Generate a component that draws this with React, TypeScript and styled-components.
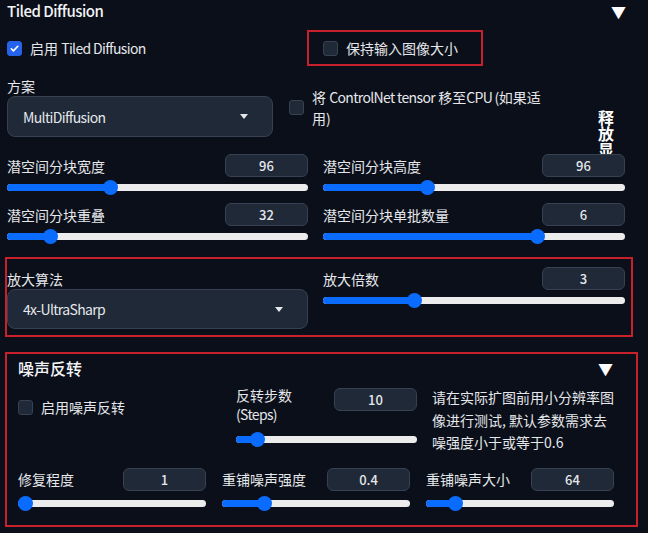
import React from "react";
import styled, { createGlobalStyle } from "styled-components";

const GlobalStyle = createGlobalStyle`
  body {
    margin: 0;
    background: #0b0f19;
    font-family: "Noto Sans CJK SC", "Noto Sans", sans-serif;
    color: #e5e7eb;
  }
`;

const Page = styled.div`
  width: 648px;
  height: 533px;
  overflow: hidden;
  background: #0b0f19;
  padding-left: 7px;
  box-sizing: border-box;
`;

const Header = styled.div<{ $w: number }>`
  height: 22px;
  width: ${(p) => p.$w}px;
  display: flex;
  align-items: center;
  justify-content: space-between;
  margin-bottom: 8px;
`;

const Title = styled.div`
  font-size: 15px;
  font-weight: 500;
  color: #f3f4f6;
  line-height: 22px;
  letter-spacing: -0.5px;
`;

const SubTitle = styled.div`
  font-size: 16px;
  font-weight: 500;
  color: #f3f4f6;
  line-height: 22px;
`;

const Caret = styled.span`
  font-size: 15px;
  color: #ffffff;
  line-height: 1;
`;

// latin runs in the reference are narrower than our font
const Lat = styled.span`
  letter-spacing: -0.65px;
`;

const TopRow = styled.div`
  display: grid;
  grid-template-columns: 300px 302px;
  column-gap: 16px;
  height: 36px;
`;

const CheckRow = styled.label`
  display: flex;
  align-items: center;
  gap: 8px;
  font-size: 14px;
  color: #e5e7eb;
  height: 36px;
`;

const RedFrame = styled.div`
  border: 2px solid #c9212b;
  box-sizing: border-box;
`;

const KeepFrame = styled(RedFrame)`
  margin-left: -16px;
  width: 176px;
  height: 36px;
  padding-left: 14px;
  display: flex;
  align-items: center;
`;

const Box = styled.span<{ $on?: boolean }>`
  width: 15px;
  height: 15px;
  flex: none;
  border-radius: 3px;
  box-sizing: border-box;
  background: ${(p) => (p.$on ? "#2563eb" : "#1f2937")};
  border: 1px solid ${(p) => (p.$on ? "#2563eb" : "#374151")};
  display: flex;
  align-items: center;
  justify-content: center;
`;

const SchemeRow = styled.div`
  display: flex;
  margin-top: 10px;
  height: 61px;
`;

const Field = styled.div<{ $w: number }>`
  width: ${(p) => p.$w}px;
  flex: none;
  display: flex;
  flex-direction: column;
`;

const Label = styled.div`
  font-size: 14px;
  line-height: 20px;
  color: #e5e7eb;
  white-space: nowrap;
`;

const Select = styled.div<{ $h: number }>`
  height: ${(p) => p.$h}px;
  box-sizing: border-box;
  background: #1f2937;
  border: 1px solid #374151;
  border-radius: 8px;
  display: flex;
  align-items: center;
  justify-content: space-between;
  padding: 0 24px 0 15px;
  font-size: 14px;
  color: #e5e7eb;
`;

const Arrow = styled.span`
  width: 0;
  height: 0;
  border-left: 4px solid transparent;
  border-right: 4px solid transparent;
  border-top: 5px solid #e5e7eb;
`;

const CpuBox = styled.div`
  display: flex;
  align-items: flex-start;
  gap: 8px;
  margin-left: 16px;
  padding-top: 24px;
  width: 256px;
`;

const CpuText = styled.div`
  font-size: 14px;
  line-height: 21px;
  margin-top: -13px;
  color: #e5e7eb;
`;

const FreeButton = styled.div`
  margin-left: 52px;
  margin-top: 33px;
  width: 18px;
  height: 45px;
  overflow: hidden;
  font-size: 16px;
  font-weight: 700;
  line-height: 16px;
  color: #ffffff;
  text-align: center;
`;

const Grid2 = styled.div`
  display: grid;
  grid-template-columns: 301px 302px;
  column-gap: 15px;
`;

const SliderBlock = styled.div<{ $gap?: number }>`
  display: flex;
  flex-direction: column;
  padding-bottom: ${(p) => p.$gap ?? 0}px;
`;

const SliderHead = styled.div`
  display: flex;
  align-items: center;
  justify-content: space-between;
  height: 23px;
`;

const NumBox = styled.div`
  width: 83px;
  height: 23px;
  box-sizing: border-box;
  background: #1f2937;
  border: 1px solid #374151;
  border-radius: 6px;
  display: flex;
  align-items: center;
  justify-content: center;
  font-size: 13px;
  font-weight: 500;
  color: #e5e7eb;
`;

const Track = styled.div<{ $top?: number }>`
  position: relative;
  height: 7px;
  margin-top: ${(p) => p.$top ?? 7}px;
  margin-bottom: 4px;
  border-radius: 4px;
  background: #ececec;
`;

const Fill = styled.div`
  position: absolute;
  left: 0;
  top: 0;
  bottom: 0;
  border-radius: 4px;
  background: #0a6cff;
`;

const Thumb = styled.div`
  position: absolute;
  top: 50%;
  width: 15px;
  height: 15px;
  margin-left: -7px;
  margin-top: -7.5px;
  border-radius: 50%;
  background: #0a6cff;
`;

const TopSliders = styled.div`
  margin-top: 17px;
`;

const UpscaleFrame = styled(RedFrame)`
  margin-left: -2px;
  margin-top: 13px;
  width: 628px;
  height: 80px;
  padding: 8px 0 0 0;
`;

const NoiseFrame = styled(RedFrame)`
  margin-left: -2px;
  margin-top: 15px;
  width: 633px;
  height: 175px;
  padding: 0 0 0 11px;
`;

const NoiseHeader = styled.div`
  display: flex;
  align-items: center;
  justify-content: space-between;
  width: 595px;
  height: 28px;
`;

const NoiseGrid = styled.div`
  display: grid;
  grid-template-columns: 203px 181px 186px;
  column-gap: 15px;
  margin-top: 4px;
`;

const StepsHead = styled.div`
  display: flex;
  justify-content: space-between;
  align-items: flex-start;
`;

const StepsLabel = styled.div`
  font-size: 14px;
  line-height: 19px;
  color: #e5e7eb;
`;

const Help = styled.div`
  font-size: 14px;
  line-height: 22.5px;
  color: #e5e7eb;
`;

const Grid3 = styled.div`
  display: grid;
  grid-template-columns: 188px 188px 188px;
  column-gap: 16px;
  margin-top: 14px;
`;

const Check = () => (
  <svg width="11" height="11" viewBox="0 0 12 12">
    <path d="M2.5 6.3l2.3 2.3 4.8-5" fill="none" stroke="#fff" strokeWidth="1.8" strokeLinecap="round" strokeLinejoin="round" />
  </svg>
);

const Slider = ({ v, top }: { v: number; top?: number }) => (
  <Track $top={top}>
    <Fill style={{ width: `calc(7px + ${v} * (100% - 14px))` }} />
    <Thumb style={{ left: `calc(7px + ${v} * (100% - 14px))` }} />
  </Track>
);

const NumSlider = ({ label, value, v, gap, top }: { label: string; value: string; v: number; gap?: number; top?: number }) => (
  <SliderBlock $gap={gap}>
    <SliderHead>
      <Label>{label}</Label>
      <NumBox>{value}</NumBox>
    </SliderHead>
    <Slider v={v} top={top} />
  </SliderBlock>
);

export default function App() {
  return (
    <Page>
      <GlobalStyle />
      <Header $w={619}>
        <Title>Tiled Diffusion</Title>
        <Caret>▼</Caret>
      </Header>

      <TopRow>
        <CheckRow>
          <Box $on>
            <Check />
          </Box>
          <span>
            启用 <Lat>Tiled Diffusion</Lat>
          </span>
        </CheckRow>
        <KeepFrame>
          <CheckRow>
            <Box />
            保持输入图像大小
          </CheckRow>
        </KeepFrame>
      </TopRow>

      <SchemeRow>
        <Field $w={266}>
          <Label>方案</Label>
          <Select $h={41}>
            <Lat>MultiDiffusion</Lat>
            <Arrow />
          </Select>
        </Field>
        <CpuBox>
          <Box />
          <CpuText>
            将 <Lat>ControlNet tensor</Lat> 移至<Lat>CPU (</Lat>如果适用<Lat>)</Lat>
          </CpuText>
        </CpuBox>
        <FreeButton>释放显存</FreeButton>
      </SchemeRow>

      <TopSliders>
        <Grid2>
          <NumSlider label="潜空间分块宽度" value="96" v={0.334} gap={8} />
          <NumSlider label="潜空间分块高度" value="96" v={0.338} gap={8} />
          <NumSlider label="潜空间分块重叠" value="32" v={0.125} />
          <NumSlider label="潜空间分块单批数量" value="6" v={0.718} />
        </Grid2>
      </TopSliders>

      <UpscaleFrame>
        <Grid2>
          <Field $w={301}>
            <Label style={{ marginTop: 2 }}>放大算法</Label>
            <Select $h={40}>
              <Lat>4x-UltraSharp</Lat>
              <Arrow />
            </Select>
          </Field>
          <NumSlider label="放大倍数" value="3" v={0.29} />
        </Grid2>
      </UpscaleFrame>

      <NoiseFrame>
        <NoiseHeader>
          <SubTitle>噪声反转</SubTitle>
          <Caret>▼</Caret>
        </NoiseHeader>
        <NoiseGrid>
          <CheckRow style={{ height: 30, marginTop: 6 }}>
            <Box />
            启用噪声反转
          </CheckRow>
          <SliderBlock>
            <StepsHead>
              <StepsLabel>
                反转步数
                <br />
                <Lat>(Steps)</Lat>
              </StepsLabel>
              <NumBox style={{ marginTop: 2 }}>10</NumBox>
            </StepsHead>
            <Slider v={0.084} top={12} />
          </SliderBlock>
          <Help>请在实际扩图前用小分辨率图像进行测试, 默认参数需求去噪强度小于或等于0.6</Help>
        </NoiseGrid>
        <Grid3>
          <NumSlider label="修复程度" value="1" v={0} top={9} />
          <NumSlider label="重铺噪声强度" value="0.4" v={0.2} top={9} />
          <NumSlider label="重铺噪声大小" value="64" v={0.126} top={9} />
        </Grid3>
      </NoiseFrame>
    </Page>
  );
}
